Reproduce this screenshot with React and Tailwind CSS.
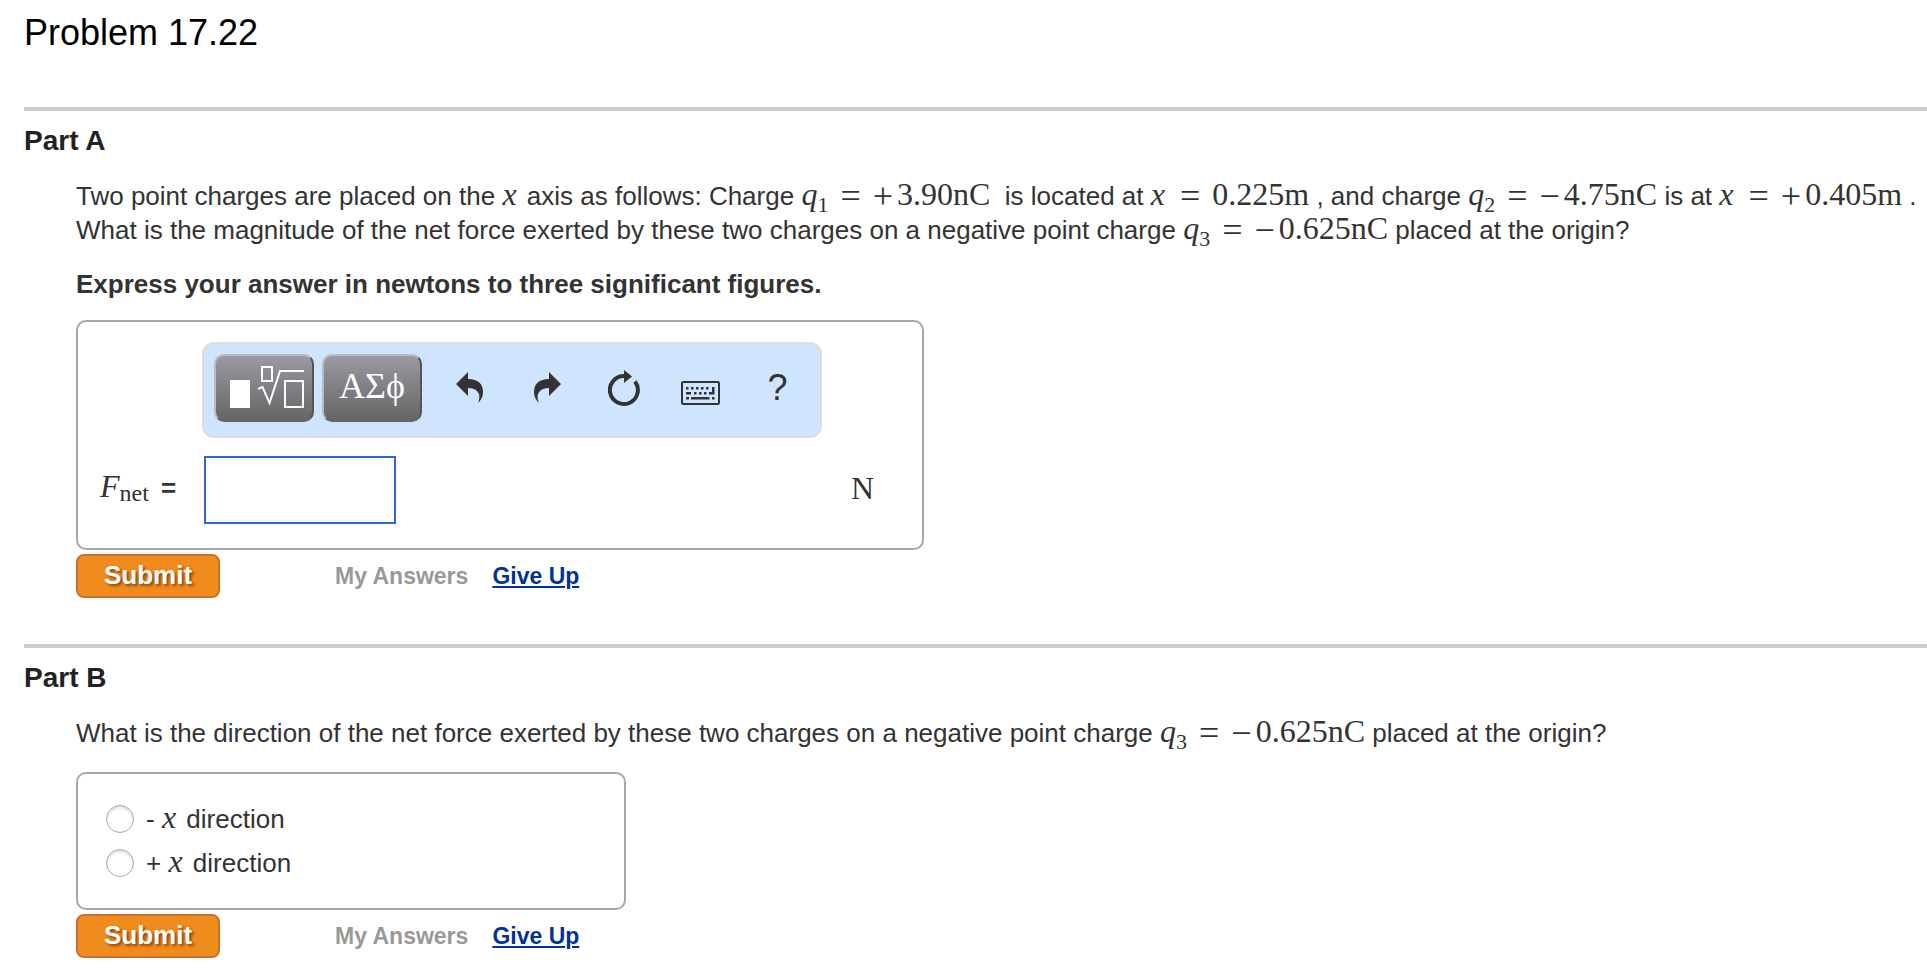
import React, { useState } from "react";

const serif = "font-['Liberation_Serif',serif] text-[32px] leading-[0]";
const operator = "align-[-3px] text-[36px]";

function Variable({ name, sub }) {
  return (
    <span className={serif}>
      <i className={name === "x" ? "mr-[3px]" : ""}>{name}</i>
      {sub && <span className="align-[-7px] text-[22px]">{sub}</span>}
    </span>
  );
}

function Equation({ name, sub, sign, value, unit }) {
  return (
    <span className="whitespace-nowrap">
      <Variable name={name} sub={sub} />
      <span className={serif}>
        <span className={`${operator} mx-3`}>=</span>
        {sign && <span className={`${operator} mr-1`}>{sign}</span>}
        {value}
        {unit}
      </span>
    </span>
  );
}

function TemplateIcon() {
  return (
    <svg width="96" height="64" viewBox="0 0 96 64" fill="none" stroke="#fff" strokeWidth="2" aria-hidden="true">
      <rect x="14" y="24" width="20" height="28" fill="#fff" stroke="none" />
      <rect x="46" y="11" width="10" height="14" />
      <path d="M42 33l4.500-2 7 16L64 15H88" />
      <rect x="69" y="25" width="18" height="26" />
    </svg>
  );
}

function UndoIcon({ flipped }) {
  return (
    <svg width="28" height="32" viewBox="0 0 28 32" fill="#333" className={flipped ? "-scale-x-100" : ""} aria-hidden="true">
      <path d="M0 12L12 0v7c10 0 15 5 15 13 0 5-2 8-5 11 2-5 2-9-1-12-2-2-5-3-9-3v8z" />
    </svg>
  );
}

function ResetIcon() {
  return (
    <svg width="32" height="38" viewBox="0 0 32 38" fill="none" aria-hidden="true">
      <path d="M16 7A14 14 0 1 0 27 12.500" stroke="#333" strokeWidth="4" />
      <path d="M16 1l8 6.500-8 6.500z" fill="#333" />
    </svg>
  );
}

function KeyboardIcon() {
  return (
    <svg width="39" height="24" viewBox="0 0 39 24" fill="none" stroke="#333" aria-hidden="true">
      <rect x="1" y="1" width="37" height="22" rx="1.500" strokeWidth="2" />
      <g strokeWidth="2.500">
        <path d="M5 7.250h23M13 12.250h15" strokeDasharray="2.500 2.500" />
        <path d="M5 12.250h5M28 12.250h5.500M32.250 6v7M5 17.250h3M10 17.250h18.500M31 17.250h2.500" />
      </g>
    </svg>
  );
}

function SubmitRow() {
  return (
    <div className="mt-1 flex items-center text-[23px] font-bold">
      <button
        type="submit"
        className="h-11 w-36 rounded-lg border-2 border-[#c96f2c] bg-[#f08c1e] pb-0.5 text-[26px] leading-none font-bold text-white [text-shadow:2px_2px_3px_rgba(90,40,0,0.7)]"
      >
        Submit
      </button>
      <span className="ml-[115px] text-[#999]">My Answers</span>
      <a href="#give-up" className="ml-6 text-[#003399] underline decoration-2 underline-offset-2">
        Give Up
      </a>
    </div>
  );
}

function Part({ title, children }) {
  return (
    <section className="ml-6 border-t-4 border-[#ccc] pt-[9px]">
      <h2 className="text-[28px] leading-[42px] font-bold text-[#222]">{title}</h2>
      <div className="ml-[52px]">{children}</div>
    </section>
  );
}

export default function App() {
  const [answer, setAnswer] = useState("");
  const [direction, setDirection] = useState("");

  const templateButton =
    "flex h-[68px] w-[100px] items-center justify-center rounded-[10px] border-2 border-t-[#bbb] border-l-[#bbb] border-r-[#555] border-b-[#666] bg-linear-to-b from-[#9b99a3] to-[#666] text-white";
  const iconButton = "flex flex-1 items-center justify-center";

  const directions = [
    { value: "negative", sign: "-" },
    { value: "positive", sign: "+" },
  ];

  return (
    <main className="bg-white font-['Liberation_Sans',Arial,sans-serif] text-[26px] leading-[34px] text-[#333]">
      <h1 className="ml-6 pt-[9px] pb-[50px] text-[36px] leading-[48px] text-black">Problem 17.22</h1>

      <Part title="Part A">
        <p className="mt-[17px]">
          Two point charges are placed on the <Variable name="x" /> axis as follows: Charge{" "}
          <Equation name="q" sub="1" sign="+" value="3.90" unit="nC" />&nbsp; is located at{" "}
          <Equation name="x" value="0.225" unit="m" /> , and charge{" "}
          <Equation name="q" sub="2" sign="−" value="4.75" unit="nC" /> is at{" "}
          <Equation name="x" sign="+" value="0.405" unit="m" /> .
          <br />
          What is the magnitude of the net force exerted by these two charges on a negative point charge{" "}
          <Equation name="q" sub="3" sign="−" value="0.625" unit="nC" /> placed at the origin?
        </p>
        <p className="mt-5 font-bold">Express your answer in newtons to three significant figures.</p>

        <div className="mt-[19px] w-[848px] rounded-[10px] border-2 border-[#a7a7a7] pt-5 pb-6">
          <div className="ml-[124px] flex h-24 w-[620px] rounded-xl border-2 border-[#ddd] bg-[#cfe5ff] pt-2.5 pr-1 pl-2.5">
            <div className="flex h-[68px] gap-2">
              <button type="button" aria-label="Templates" className={templateButton}>
                <TemplateIcon />
              </button>
              <button type="button" aria-label="Symbols" className={templateButton}>
                <span className="pb-1 font-['Liberation_Serif',serif] text-[36px]">ΑΣϕ</span>
              </button>
            </div>
            <div className="ml-2.5 flex h-[68px] flex-1">
              <button type="button" aria-label="Undo" className={iconButton}><UndoIcon /></button>
              <button type="button" aria-label="Redo" className={iconButton}><UndoIcon flipped /></button>
              <button type="button" aria-label="Reset" className={iconButton}><ResetIcon /></button>
              <button type="button" aria-label="Keyboard" className={`${iconButton} pt-2.5`}><KeyboardIcon /></button>
              <button type="button" aria-label="Help" className={`${iconButton} text-[36px]`}>?</button>
            </div>
          </div>

          <div className="mt-[18px] flex items-center">
            <label htmlFor="net-force" className="w-[126px] pl-[22px]">
              <span className={serif}>
                <i>F</i>
                <span className="align-[-4px] text-2xl">net</span>
              </span>
              <b className="ml-3">=</b>
            </label>
            <input
              id="net-force"
              type="text"
              value={answer}
              onChange={(e) => setAnswer(e.target.value)}
              className="h-[68px] w-48 border-2 border-[#3366cc] px-2 outline-none"
            />
            <span className={`${serif} mr-12 ml-auto pb-1`}>N</span>
          </div>
        </div>
        <SubmitRow />
      </Part>

      <div className="h-[46px]" />

      <Part title="Part B">
        <p className="mt-[17px]">
          What is the direction of the net force exerted by these two charges on a negative point charge{" "}
          <Equation name="q" sub="3" sign="−" value="0.625" unit="nC" /> placed at the origin?
        </p>
        <fieldset className="mt-[22px] flex w-[550px] flex-col gap-2.5 rounded-[10px] border-2 border-[#a7a7a7] py-7 pl-7">
          {directions.map((d) => (
            <label key={d.value} className="flex items-center gap-3">
              <input
                type="radio"
                name="direction"
                value={d.value}
                checked={direction === d.value}
                onChange={() => setDirection(d.value)}
                className="size-7 appearance-none rounded-full border border-[#aaa] bg-white shadow-[inset_0_2px_3px_#ddd] checked:border-8 checked:border-[#3366cc]"
              />
              <span>
                {d.sign} <Variable name="x" /> direction
              </span>
            </label>
          ))}
        </fieldset>
        <SubmitRow />
      </Part>
    </main>
  );
}
